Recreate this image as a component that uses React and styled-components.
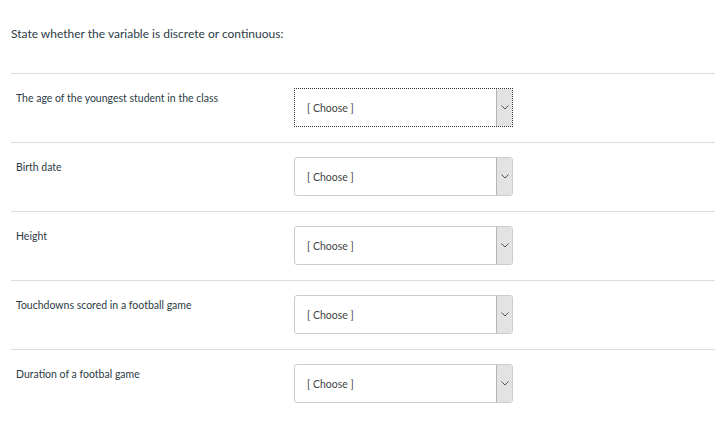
import React from 'react'
import styled, { createGlobalStyle } from 'styled-components'

const GlobalStyle = createGlobalStyle`
  body {
    margin: 0;
    background: #fff;
    font-family: Lato, "Liberation Sans", sans-serif;
    color: #2d3b45;
  }
`

const questions = [
  'The age of the youngest student in the class',
  'Birth date',
  'Height',
  'Touchdowns scored in a football game',
  'Duration of a footbal game',
]

const App = () => {
  return (
    <>
      <GlobalStyle />
      <Page>
        <Title>State whether the variable is discrete or continuous:</Title>
        {questions.map((q, i) => (
          <Row key={q}>
            <Label>{q}</Label>
            <Select focused={i === 0}>
              <Value>[ Choose ]</Value>
              <Arrow>
                <svg width="8" height="5" viewBox="0 0 8 5">
                  <path d="M0.5 0.5 L4 4 L7.5 0.5" fill="none" stroke="#555" strokeWidth="1" />
                </svg>
              </Arrow>
            </Select>
          </Row>
        ))}
      </Page>
    </>
  )
}

const Page = styled.div`
  width: 704px;
  margin-left: 11px;
`
const Title = styled.div`
  font-size: 12px;
  line-height: 16px;
  padding-top: 26px;
  height: 47px;
  color: #2d3b45;
`
const Row = styled.div`
  display: flex;
  align-items: flex-start;
  height: 68px;
  border-top: 1px solid #dcdcdc;
`
const Label = styled.div`
  width: 278px;
  padding-left: 5px;
  padding-top: 17px;
  font-size: 10.5px;
  line-height: 14px;
  color: #2d3b45;
`
const Select = styled.div`
  display: flex;
  margin-top: 14px;
  width: 219px;
  height: 39px;
  box-sizing: border-box;
  border: 1px ${p => (p.focused ? 'dotted #333' : 'solid #c7cdd1')};
  border-radius: ${p => (p.focused ? '0' : '3px')};
  background: #fff;
  overflow: hidden;
`
const Value = styled.div`
  flex: 1;
  display: flex;
  align-items: center;
  padding-left: 12px;
  font-size: 10.5px;
  color: #444;
`
const Arrow = styled.div`
  width: 15px;
  display: flex;
  align-items: center;
  justify-content: center;
  background: #e3e3e3;
  border-left: 1px solid #b5b5b5;
`

export default App
